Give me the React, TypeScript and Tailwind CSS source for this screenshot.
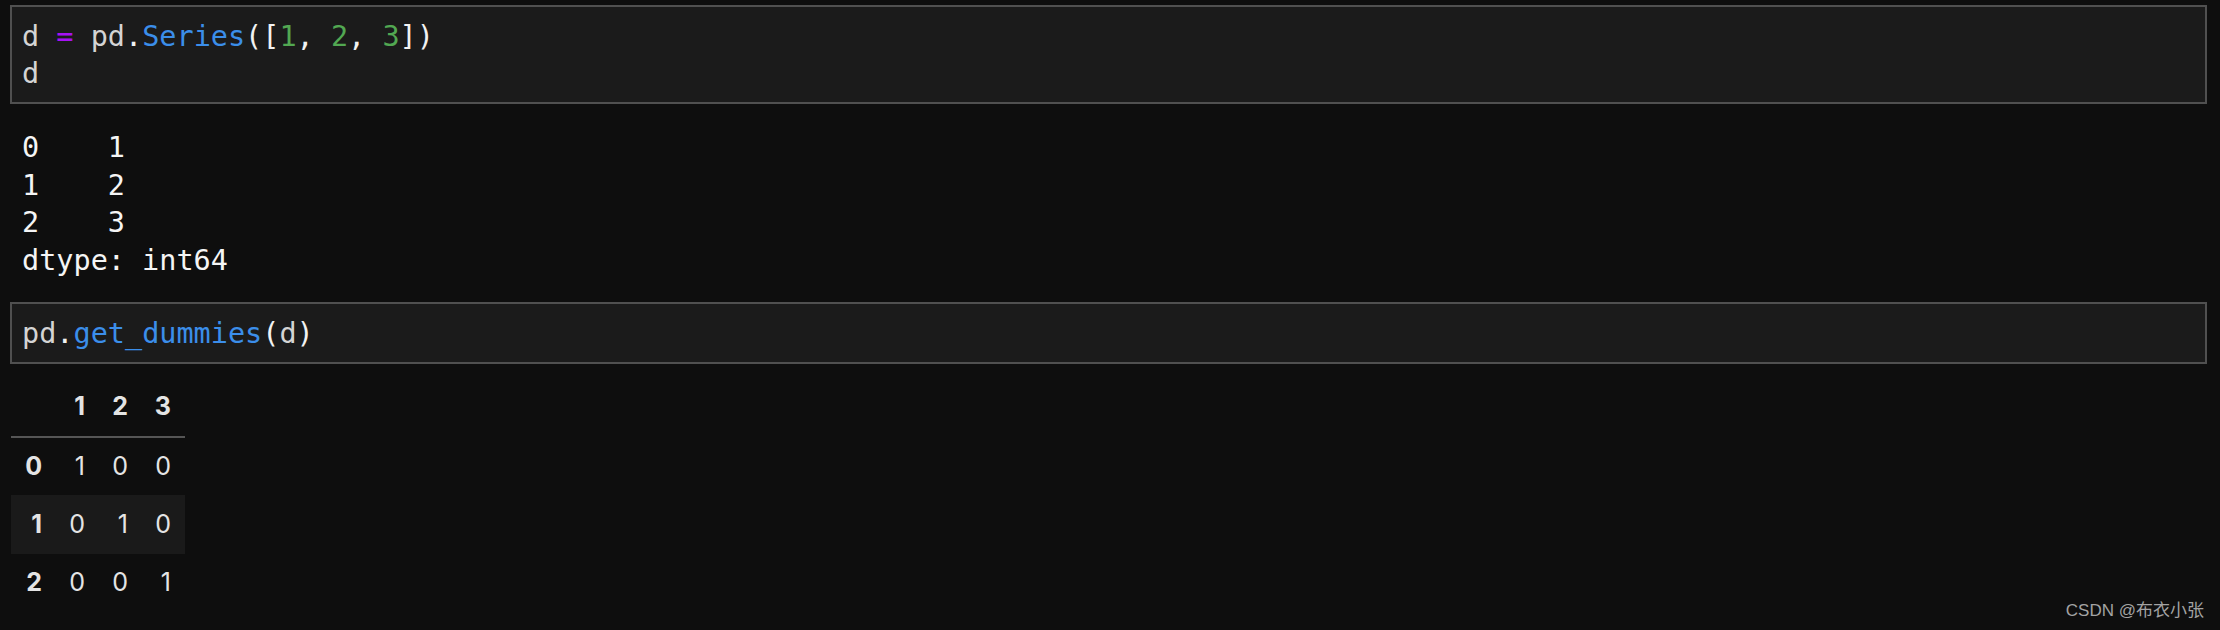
const mono = "font-['DejaVu_Sans_Mono',monospace]";

type Tok = { t: string; c?: string };

const tone: Record<string, string> = {
  id: "text-[#d4d4d4]",
  op: "text-[#a612f5]",
  fn: "text-[#3b8eea]",
  num: "text-[#52a852]",
  p: "text-[#f2f2f2]",
};

function CodeLine({ toks }: { toks: Tok[] }) {
  return (
    <div className="whitespace-pre">
      {toks.map((k, i) => (
        <span key={i} className={tone[k.c ?? "id"]}>
          {k.t}
        </span>
      ))}
    </div>
  );
}

function Cell({ lines }: { lines: Tok[][] }) {
  return (
    <div
      className={`ml-[10px] mr-[13px] border-2 border-[#505050] bg-[#1b1b1b] pl-[10px] pt-[11px] pb-[10px] text-[28.5px] leading-[37px] ${mono}`}
    >
      {lines.map((l, i) => (
        <CodeLine key={i} toks={l} />
      ))}
    </div>
  );
}

const rows = [
  ["0", "1", "0", "0"],
  ["1", "0", "1", "0"],
  ["2", "0", "0", "1"],
];

export default function App() {
  return (
    <div className="relative h-[630px] w-full overflow-hidden bg-[#0e0e0e] pt-[5px]">
      <Cell
        lines={[
          [
            { t: "d " },
            { t: "=", c: "op" },
            { t: " pd" },
            { t: ".", c: "p" },
            { t: "Series", c: "fn" },
            { t: "([", c: "p" },
            { t: "1", c: "num" },
            { t: ", ", c: "p" },
            { t: "2", c: "num" },
            { t: ", ", c: "p" },
            { t: "3", c: "num" },
            { t: "])", c: "p" },
          ],
          [{ t: "d" }],
        ]}
      />

      <pre
        className={`mt-[25px] mb-[23px] pl-[22px] text-[28.5px] leading-[37.5px] text-[#f5f5f5] ${mono}`}
      >
        {"0    1\n1    2\n2    3\ndtype: int64"}
      </pre>

      <Cell
        lines={[
          [
            { t: "pd" },
            { t: ".", c: "p" },
            { t: "get_dummies", c: "fn" },
            { t: "(", c: "p" },
            { t: "d" },
            { t: ")", c: "p" },
          ],
        ]}
      />

      <table className="ml-[11px] mt-[14px] border-collapse font-['Inter',sans-serif] text-[25px] text-[#e4e4e4]">
        <thead>
          <tr className="h-[58.5px] border-b-2 border-[#555555]">
            <th className="w-[45px]"></th>
            {["1", "2", "3"].map((h) => (
              <th key={h} className="w-[43px] pr-[14px] text-right font-bold">
                {h}
              </th>
            ))}
          </tr>
        </thead>
        <tbody>
          {rows.map((r, i) => (
            <tr key={i} className={`h-[58.5px] ${i === 1 ? "bg-[#1a1a1a]" : ""}`}>
              <th className="pr-[14px] text-right font-bold">{r[0]}</th>
              {r.slice(1).map((v, j) => (
                <td key={j} className="pr-[14px] text-right font-normal">
                  {v}
                </td>
              ))}
            </tr>
          ))}
        </tbody>
      </table>

      <div className="absolute right-[16px] bottom-[7px] font-['Liberation_Sans','Noto_Sans_CJK_SC',sans-serif] text-[17px] text-[#a3a3a3]">
        CSDN @布衣小张
      </div>
    </div>
  );
}
